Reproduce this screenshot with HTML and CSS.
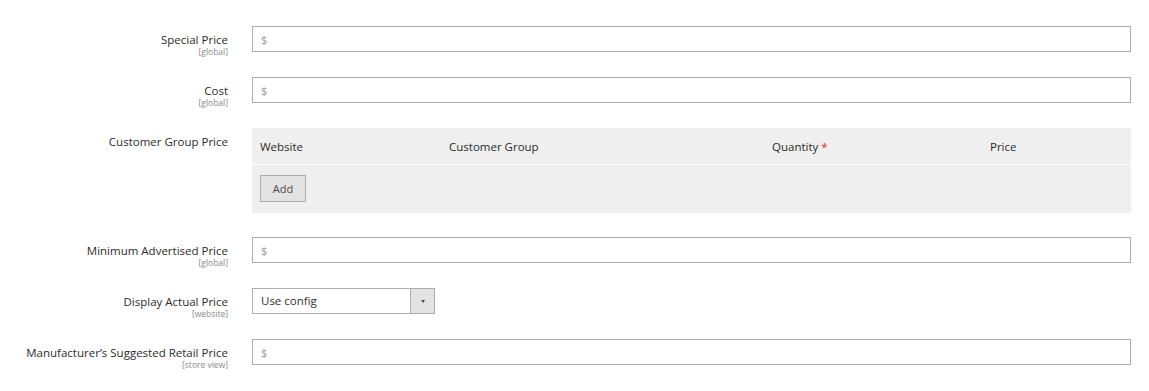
FILE: index.html
```html
<!DOCTYPE html>
<html lang="en">
<head>
  <meta charset="UTF-8" />
  <title>Advanced Pricing</title>
  <link rel="stylesheet" href="styles.css">
</head>
<body>

  <div class="form">
    <div class="field">
      <div class="label">
        <span>Special Price</span>
        <span class="scope">[global]</span>
      </div>
      <div class="control">
        <input class="input" type="text" placeholder="$" />
      </div>
    </div>

    <div class="field">
      <div class="label">
        <span>Cost</span>
        <span class="scope">[global]</span>
      </div>
      <div class="control">
        <input class="input" type="text" placeholder="$" />
      </div>
    </div>

    <div class="field field-grid">
      <div class="label">
        <span>Customer Group Price</span>
      </div>
      <div class="control">
        <div class="grid-table">
          <div class="grid-head">
            <span>Website</span>
            <span>Customer Group</span>
            <span>Quantity <em class="required">*</em></span>
            <span>Price</span>
          </div>
          <div class="grid-body">
            <button class="btn" type="button">Add</button>
          </div>
        </div>
      </div>
    </div>

    <div class="field">
      <div class="label">
        <span>Minimum Advertised Price</span>
        <span class="scope">[global]</span>
      </div>
      <div class="control">
        <input class="input" type="text" placeholder="$" />
      </div>
    </div>

    <div class="field">
      <div class="label">
        <span>Display Actual Price</span>
        <span class="scope">[website]</span>
      </div>
      <div class="control">
        <div class="select">
          <span class="select-value">Use config</span>
          <span class="select-arrow"></span>
        </div>
      </div>
    </div>

    <div class="field">
      <div class="label">
        <span>Manufacturer’s Suggested Retail Price</span>
        <span class="scope">[store view]</span>
      </div>
      <div class="control">
        <input class="input" type="text" placeholder="$" />
      </div>
    </div>
  </div>

</body>
</html>
```

FILE: styles.css
```css
body {
  font-family: 'Open Sans', 'Liberation Sans', sans-serif;
  background: #fff;
  color: #303030;
  margin: 0;
}
.form {
  padding: 26px 18px 0 0;
}
.field {
  display: grid;
  grid-template-columns: 228px 1fr;
  column-gap: 24px;
  margin-bottom: 25px;
}
.field-grid {
  margin-bottom: 24px;
}
.label {
  box-sizing: border-box;
  height: 26px;
  display: flex;
  flex-direction: column;
  align-items: flex-end;
  text-align: right;
  font-size: 11.5px;
  font-weight: 400;
  line-height: 14px;
  padding-top: 7px;
  color: #2b2b2b;
  white-space: nowrap;
}
.scope {
  font-size: 8.5px;
  line-height: 9px;
  color: #8a8a8a;
}
.input {
  box-sizing: border-box;
  display: block;
  width: 100%;
  height: 26px;
  border: 1px solid #adadad;
  padding: 0 8px;
  font-family: inherit;
  font-size: 11px;
  color: #303030;
  outline: none;
}
.input::placeholder {
  color: #999;
}
.grid-table {
  background: #efefef;
}
.grid-head {
  display: grid;
  grid-template-columns: 189px 323px 218px 1fr;
  height: 36px;
  align-items: center;
  padding-left: 8px;
  border-bottom: 1px solid #fff;
  font-size: 11.5px;
  color: #2b2b2b;
}
.required {
  font-style: normal;
  color: #e22626;
}
.grid-body {
  height: 48px;
  box-sizing: border-box;
  padding: 10px 8px;
}
.btn {
  box-sizing: border-box;
  display: block;
  width: 46px;
  height: 27px;
  background: #e3e3e3;
  border: 1px solid #adadad;
  font-family: inherit;
  font-size: 11px;
  font-weight: 400;
  color: #514943;
  padding: 0;
}
.select {
  box-sizing: border-box;
  display: flex;
  width: 183px;
  height: 26px;
  border: 1px solid #adadad;
  font-size: 11.5px;
}
.select-value {
  flex: 1;
  padding-left: 8px;
  line-height: 24px;
}
.select-arrow {
  width: 23px;
  background: #e3e3e3;
  border-left: 1px solid #adadad;
  display: flex;
  align-items: center;
  justify-content: center;
}
.select-arrow:after {
  content: '';
  border-left: 2.5px solid transparent;
  border-right: 2.5px solid transparent;
  border-top: 3px solid #514943;
}
```
